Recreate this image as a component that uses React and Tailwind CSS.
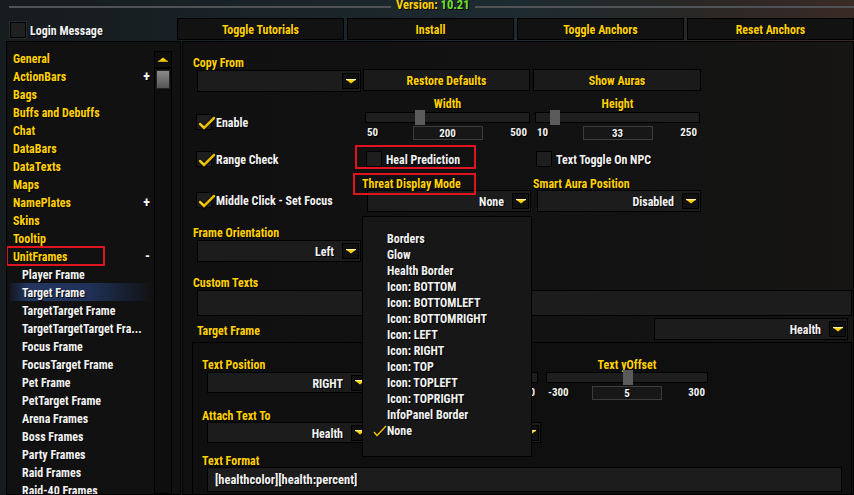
import React from "react";

const sh = "[text-shadow:1px_1px_0_#000]";
const yellow = "text-[#ffd100]";
const white = "text-[#f2f2f2]";
const nudge = "relative top-[1px]";

const ArrowDown = () => (
  <svg width="10" height="5" viewBox="0 0 10 5">
    <polygon points="0,0.5 10,0.5 5,4.5" fill="#ffd100" />
    <rect x="0" y="0" width="10" height="1.2" fill="#fff3a0" />
  </svg>
);

const ArrowUp = () => (
  <svg width="10" height="5" viewBox="0 0 10 5">
    <polygon points="0,4.5 10,4.5 5,0.5" fill="#ffd100" />
    <rect x="0" y="3.8" width="10" height="1.2" fill="#c89a00" />
  </svg>
);

const Check = () => (
  <svg width="18" height="15" viewBox="0 0 18 15" className="absolute left-[1px] top-[1px]">
    <polyline points="2,8 6,12 16,2" fill="none" stroke="#000" strokeOpacity="0.7" strokeWidth="4.5" strokeLinecap="round" />
    <polyline points="2,8 6,12 16,2" fill="none" stroke="#e8bb00" strokeWidth="2.6" strokeLinecap="round" />
    <polyline points="2.5,8 6,11.2" fill="none" stroke="#fff07a" strokeWidth="0.9" />
  </svg>
);

function Label({ children, className = "" }) {
  return (
    <div className={`h-[14px] leading-[14px] text-[12px] font-bold ${yellow} ${sh} whitespace-nowrap ${className}`}>
      <span className={nudge}>{children}</span>
    </div>
  );
}

function CheckBox({ label, checked, className = "", box = "bg-[#1e1e1e]" }) {
  return (
    <div className={`flex items-center h-[16px] ${className}`}>
      <div className={`relative w-[16px] h-[16px] shrink-0 border border-black ${box}`}>
        {checked && <Check />}
      </div>
      <span className={`ml-[4px] text-[12px] font-bold ${white} ${sh} whitespace-nowrap ${nudge}`}>{label}</span>
    </div>
  );
}

function Dropdown({ value = "", className = "", h = "h-[22px]" }) {
  return (
    <div className={`flex items-center justify-end border border-black bg-[#1c1c1c] ${h} ${className}`}>
      {value && <span className={`mr-[8px] text-[12px] font-bold ${white} ${sh} ${nudge}`}>{value}</span>}
      <div className="mr-[1px] w-[17px] h-[16px] flex items-center justify-center border border-black bg-[#101010]">
        <ArrowDown />
      </div>
    </div>
  );
}

function Button({ children, className = "" }) {
  return (
    <div className={`flex items-center justify-center border border-black text-[12px] font-bold ${yellow} ${sh} ${className}`}>
      <span className={nudge}>{children}</span>
    </div>
  );
}

function Slider({ label, min, max, value, thumb, className = "", trackMt = "mt-[2px]" }) {
  return (
    <div className={className}>
      <Label className="text-center">{label}</Label>
      <div className={`relative h-[11px] border border-black bg-[#1e1e1e] ${trackMt}`}>
        <div className="absolute top-[-3px] w-[10px] h-[15px] bg-[#5b5b5b]" style={{ left: thumb }} />
      </div>
      <div className={`mt-[2px] h-[14px] grid grid-cols-[1fr_70px_1fr] items-center text-[11px] font-bold ${white} ${sh}`}>
        <span className="justify-self-start ml-[2px]">{min}</span>
        <div className="h-[14px] border border-[#3d3d3d] bg-[#171717] flex items-center justify-center leading-none">{value}</div>
        <span className="justify-self-end mr-[3px]">{max}</span>
      </div>
    </div>
  );
}

const navItems = [
  { name: "General" },
  { name: "ActionBars", sign: "+" },
  { name: "Bags" },
  { name: "Buffs and Debuffs" },
  { name: "Chat" },
  { name: "DataBars" },
  { name: "DataTexts" },
  { name: "Maps" },
  { name: "NamePlates", sign: "+" },
  { name: "Skins" },
  { name: "Tooltip" },
  { name: "UnitFrames", sign: "-", boxed: true },
];

const subItems = [
  "Player Frame",
  "Target Frame",
  "TargetTarget Frame",
  "TargetTargetTarget Fra...",
  "Focus Frame",
  "FocusTarget Frame",
  "Pet Frame",
  "PetTarget Frame",
  "Arena Frames",
  "Boss Frames",
  "Party Frames",
  "Raid Frames",
  "Raid-40 Frames",
];

const threatModes = [
  "Borders",
  "Glow",
  "Health Border",
  "Icon: BOTTOM",
  "Icon: BOTTOMLEFT",
  "Icon: BOTTOMRIGHT",
  "Icon: LEFT",
  "Icon: RIGHT",
  "Icon: TOP",
  "Icon: TOPLEFT",
  "Icon: TOPRIGHT",
  "InfoPanel Border",
  "None",
];

function Sidebar() {
  return (
    <aside className="w-[175px] h-full shrink-0 border border-black bg-[#111111] flex overflow-hidden">
      <div className="flex-1 pt-[7px]">
        {navItems.map((it) => (
          <div key={it.name} className="relative h-[18px] flex items-center justify-between pl-[6px] pr-[4px]">
            <span className={`text-[12px] font-bold ${yellow} ${sh} ${nudge}`}>{it.name}</span>
            {it.sign && <span className={`text-[14px] font-bold ${white} ${sh}`}>{it.sign}</span>}
            {it.boxed && <span className="absolute left-[-1px] top-[-1px] w-[99px] h-[20px] border-2 border-[#e0141e]" />}
          </div>
        ))}
        {subItems.map((s) => (
          <div
            key={s}
            className={`h-[18px] flex items-center pl-[12px] ml-[3px] ${
              s === "Target Frame"
                ? "bg-[linear-gradient(90deg,rgba(30,45,90,0.2)_0%,#22365f_12%,#1f3158_55%,rgba(20,30,60,0)_100%)]"
                : ""
            }`}
          >
            <span className={`text-[12px] font-bold ${white} ${sh} whitespace-nowrap ${nudge}`}>{s}</span>
          </div>
        ))}
      </div>
      <div className="w-[18px] mr-[8px] mt-[9px] flex flex-col">
        <div className="h-[17px] border border-black bg-[#0d0d0d] flex items-center justify-center">
          <ArrowUp />
        </div>
        <div className="flex-1 border border-black bg-[#0e0e0e] px-[1px] pt-[1px]">
          <div className="h-[19px] bg-[linear-gradient(180deg,#8a8a8a,#555555)] border border-[#222]" />
        </div>
      </div>
    </aside>
  );
}

function ThreatPopup() {
  return (
    <div className="absolute left-[179px] top-[174px] w-[170px] h-[241px] border border-black bg-[#171717] pt-[13px]">
      {threatModes.map((m) => (
        <div key={m} className="relative h-[16px] flex items-center pl-[24px]">
          {m === "None" && (
            <svg width="14" height="12" viewBox="0 0 14 12" className="absolute left-[10px] top-[3px]">
              <polyline points="1,7 4,10.5 13,1" fill="none" stroke="#000" strokeOpacity="0.5" strokeWidth="3" />
              <polyline points="1,7 4,10.5 13,1" fill="none" stroke="#e8bb00" strokeWidth="1.6" />
            </svg>
          )}
          <span className={`text-[12px] font-bold ${white} ${sh} whitespace-nowrap ${nudge}`}>{m}</span>
        </div>
      ))}
    </div>
  );
}

function MainPanel() {
  return (
    <main className="relative flex-1 h-full border border-black bg-[linear-gradient(90deg,#101010_0%,#121212_60%,#161514_100%)] pl-[10px] pt-[13px] overflow-hidden">
      {/* row: copy from / buttons */}
      <div className="grid grid-cols-[170px_170px_170px]">
        <div>
          <Label>Copy From</Label>
          <Dropdown className="ml-[4px] w-[164px] mt-[1px]" />
        </div>
        <div className="pt-[14px]">
          <Button className="w-[167px] h-[22px] bg-[#1a1a1a]">Restore Defaults</Button>
        </div>
        <div className="pt-[14px]">
          <Button className="w-[168px] h-[22px] bg-[#1a1a1a]">Show Auras</Button>
        </div>
      </div>

      {/* row: enable / sliders */}
      <div className="mt-[4px] grid grid-cols-[170px_170px_170px]">
        <div className="pt-[18px]">
          <CheckBox label="Enable" checked className="ml-[3px]" />
        </div>
        <Slider label="Width" min="50" max="500" value="200" thumb={49} className="ml-[2px] w-[165px]" />
        <Slider label="Height" min="10" max="250" value="33" thumb={14} className="ml-[2px] w-[165px]" />
      </div>

      {/* row: checkboxes */}
      <div className="mt-[12px] grid grid-cols-[170px_170px_170px]">
        <CheckBox label="Range Check" checked className="ml-[3px]" />
        <div className="relative">
          <CheckBox label="Heal Prediction" className="ml-[3px]" />
          <span className="absolute left-[-8px] top-[-6px] w-[121px] h-[24px] border-2 border-[#e0141e]" />
        </div>
        <CheckBox label="Text Toggle On NPC" className="ml-[3px]" />
      </div>

      {/* row: middle click / threat / smart aura */}
      <div className="mt-[9px] grid grid-cols-[170px_170px_170px]">
        <div className="pt-[16px]">
          <CheckBox label="Middle Click - Set Focus" checked className="ml-[3px]" />
        </div>
        <div className="relative">
          <Label className="-ml-[1px]">Threat Display Mode</Label>
          <Dropdown value="None" className="ml-[4px] w-[164px]" />
          <span className="absolute left-[-10px] top-[-3px] w-[123px] h-[22px] border-2 border-[#e0141e]" />
        </div>
        <div>
          <Label>Smart Aura Position</Label>
          <Dropdown value="Disabled" className="ml-[4px] w-[164px]" />
        </div>
      </div>

      {/* row: frame orientation */}
      <div className="mt-[13px]">
        <Label>Frame Orientation</Label>
        <Dropdown value="Left" className="ml-[4px] w-[164px] mt-[1px]" />
      </div>

      {/* row: custom texts */}
      <div className="mt-[13px]">
        <Label>Custom Texts</Label>
        <div className="ml-[4px] mr-[1px] mt-[1px] h-[26px] border border-black bg-[#1c1c1c]" />
      </div>

      {/* target frame header */}
      <div className="mt-[2px] h-[22px] flex items-center justify-between">
        <Label className="ml-[4px] mt-[2px]">Target Frame</Label>
        <Dropdown value="Health" className="w-[194px] mr-[5px]" />
      </div>

      {/* group */}
      <div className="mt-[2px] -ml-[1px] w-[660px] h-[200px] border border-black bg-[#0f0f0f] pl-[9px] pt-[14px]">
        <div className="grid grid-cols-[170px_170px_170px]">
          <div>
            <Label>Text Position</Label>
            <Dropdown value="RIGHT" h="h-[21px]" className="ml-[5px] w-[163px] mt-[1px]" />
          </div>
          {/* xOffset slider sits mostly under the open dropdown list */}
          <Slider label="" min="" max="300" value="" thumb={76} trackMt="mt-[1px]" className="ml-[4px] w-[162px]" />
          <Slider label="Text yOffset" min="-300" max="300" value="5" thumb={76} trackMt="mt-[1px]" className="ml-[4px] w-[162px]" />
        </div>
        <div className="mt-[9px] grid grid-cols-[170px_170px_170px]">
          <div>
            <Label>Attach Text To</Label>
            <Dropdown value="Health" h="h-[21px]" className="ml-[5px] w-[163px]" />
          </div>
          <div className="pt-[14px]">
            <Dropdown h="h-[21px]" className="ml-[4px] w-[165px]" />
          </div>
        </div>
        <div className="mt-[10px]">
          <Label>Text Format</Label>
          <div className={`ml-[5px] w-[635px] h-[25px] border border-black bg-[#1c1c1c] flex items-center pl-[7px] text-[12.5px] font-bold ${white} ${sh}`}>
            <span className={nudge}>[healthcolor][health:percent]</span>
          </div>
        </div>
      </div>

      <ThreatPopup />
    </main>
  );
}

export default function App() {
  return (
    <div className="w-[854px] h-[495px] overflow-hidden bg-[linear-gradient(90deg,#161b1e_0%,#1a2429_35%,#1d2b30_60%,#2a2725_82%,#3a2a26_100%)] [font-family:'Roboto_Condensed',Roboto,sans-serif]">
      {/* header */}
      <div className="h-[14px] flex items-center">
        <div className="ml-[9px] w-[382px] h-[2px] bg-[#4f5356]" />
        <div className={`ml-[5px] -mt-[3px] text-[12.5px] font-bold ${sh} whitespace-nowrap`}>
          <span className={yellow}>Version: </span>
          <span className="text-[#74e02c]">10.21</span>
        </div>
        <div className="ml-[6px] flex-1 h-[2px] bg-[#4f5356]" />
      </div>

      {/* top row */}
      <div className="mt-[4px] h-[23px] flex">
        <div className="w-[177px] flex items-center pl-[10px]">
          <CheckBox label="Login Message" box="bg-[#202020] shadow-[0_0_0_1px_rgba(60,60,60,0.5)]" />
        </div>
        <div className="flex gap-[3px]">
          <Button className="w-[167px] h-[22px] bg-[#121212]">Toggle Tutorials</Button>
          <Button className="w-[167px] h-[22px] bg-[#121212]">Install</Button>
          <Button className="w-[167px] h-[22px] bg-[#121212]">Toggle Anchors</Button>
          <Button className="w-[167px] h-[22px] bg-[#121212]">Reset Anchors</Button>
        </div>
      </div>

      {/* body */}
      <div className="h-[454px] flex pl-[6px] gap-[1px]">
        <Sidebar />
        <MainPanel />
      </div>
    </div>
  );
}
